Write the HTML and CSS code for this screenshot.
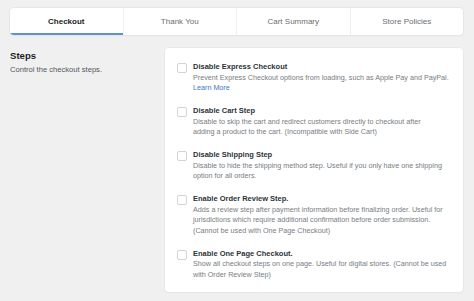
FILE: index.html
```html
<!DOCTYPE html>
<html lang="en">
<head>
  <meta charset="UTF-8">
  <meta name="viewport" content="width=device-width, initial-scale=1.0">
  <title>Checkout Settings</title>
  <link rel="stylesheet" href="styles.css">
</head>
<body>
  <nav class="tabs">
    <a class="tab active">Checkout</a>
    <a class="tab">Thank You</a>
    <a class="tab">Cart Summary</a>
    <a class="tab">Store Policies</a>
  </nav>

  <div class="section">
    <div class="intro">
      <h2>Steps</h2>
      <p>Control the checkout steps.</p>
    </div>
    <div class="card">
      <label class="option">
        <span class="box"></span>
        <span class="text">
          <span class="title">Disable Express Checkout</span>
          <span class="desc">Prevent Express Checkout options from loading, such as Apple Pay and PayPal.<br><a class="link">Learn More</a></span>
        </span>
      </label>
      <label class="option">
        <span class="box"></span>
        <span class="text">
          <span class="title">Disable Cart Step</span>
          <span class="desc">Disable to skip the cart and redirect customers directly to checkout after<br>adding a product to the cart. (Incompatible with Side Cart)</span>
        </span>
      </label>
      <label class="option">
        <span class="box"></span>
        <span class="text">
          <span class="title">Disable Shipping Step</span>
          <span class="desc">Disable to hide the shipping method step. Useful if you only have one shipping option for all orders.</span>
        </span>
      </label>
      <label class="option">
        <span class="box"></span>
        <span class="text">
          <span class="title">Enable Order Review Step.</span>
          <span class="desc">Adds a review step after payment information before finalizing order. Useful for jurisdictions which require additional confirmation before order submission. (Cannot be used with One Page Checkout)</span>
        </span>
      </label>
      <label class="option">
        <span class="box"></span>
        <span class="text">
          <span class="title">Enable One Page Checkout.</span>
          <span class="desc">Show all checkout steps on one page. Useful for digital stores. (Cannot be used with Order Review Step)</span>
        </span>
      </label>
    </div>
  </div>
</body>
</html>
```

FILE: styles.css
```css
body {
  margin: 0;
  padding: 8px 11px 8px 10px;
  background: #f0f0f1;
  font-family: "Liberation Sans", Arial, sans-serif;
  color: #1e1e1e;
}

.tabs {
  display: flex;
  height: 27px;
  background: #fff;
  border-radius: 4px;
  box-shadow: 0 0 0 1px #e6e6e8, 0 1px 2px rgba(0, 0, 0, 0.05);
  overflow: hidden;
}

.tab {
  flex: 1;
  display: flex;
  align-items: center;
  justify-content: center;
  font-size: 8px;
  color: #6b6e72;
  border-left: 1px solid #efeff0;
}

.tab:first-child {
  border-left: none;
}

.tab.active {
  color: #1e1e1e;
  font-weight: bold;
  box-shadow: inset 0 -2px 0 #5b8fd8;
}

.section {
  display: flex;
  margin-top: 13px;
}

.intro {
  width: 155px;
  padding-top: 1px;
}

.intro h2 {
  margin: 0;
  font-size: 9.6px;
  font-weight: bold;
  line-height: 13px;
}

.intro p {
  margin: 3px 0 0;
  font-size: 7.6px;
  color: #50575e;
}

.card {
  flex: 1;
  background: #fff;
  border-radius: 4px;
  box-shadow: 0 0 0 1px #e8e8ea, 0 1px 2px rgba(0, 0, 0, 0.04);
  padding: 14px 12px 12px 12px;
  display: flex;
  flex-direction: column;
  gap: 12.5px;
}

.option {
  display: flex;
  gap: 6px;
  line-height: 10.5px;
}

.box {
  flex: none;
  width: 8px;
  height: 8px;
  margin-top: 1px;
  border: 1px solid #d4d4d6;
  border-radius: 2px;
  background: #fff;
}

.text {
  display: flex;
  flex-direction: column;
}

.title {
  font-size: 7.5px;
  font-weight: bold;
  color: #2c3338;
}

.desc {
  font-size: 7.2px;
  color: #787c82;
}

.link {
  color: #3a78c9;
}
```
